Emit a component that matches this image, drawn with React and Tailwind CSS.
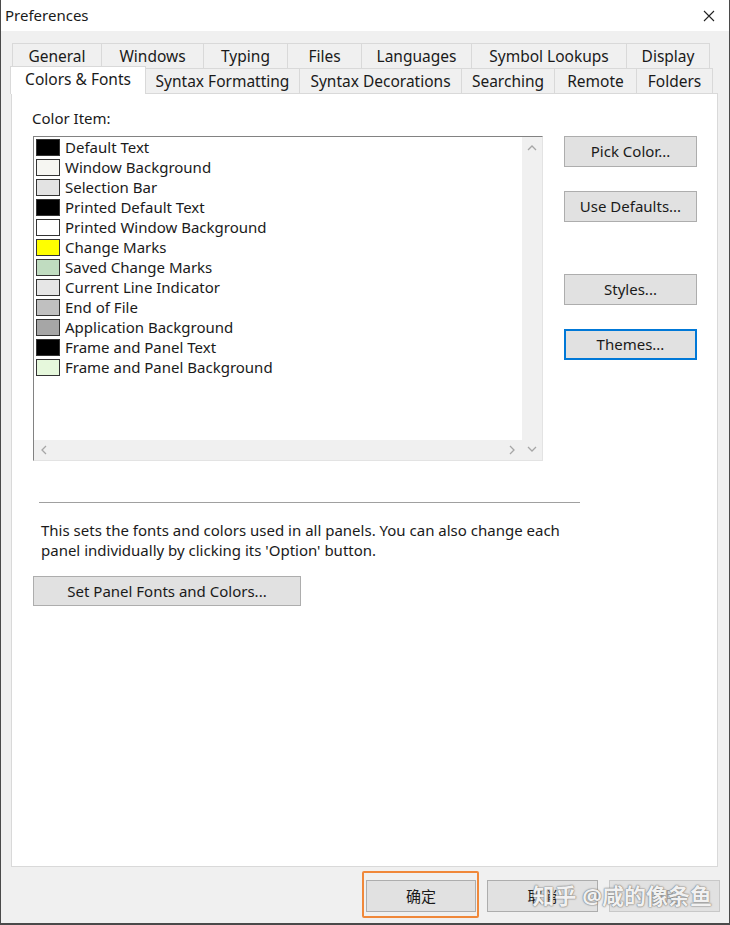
import React from "react";

const font = { fontFamily: '"Noto Sans", "Noto Sans CJK SC", sans-serif' };

const row1 = [
  ["General", "w-[90px]"],
  ["Windows", "w-[103px]"],
  ["Typing", "w-[85px]"],
  ["Files", "w-[75px]"],
  ["Languages", "w-[111px]"],
  ["Symbol Lookups", "w-[156px]"],
  ["Display", "w-[84px]"],
];

const row2 = [
  ["Syntax Formatting", "w-[155px]"],
  ["Syntax Decorations", "w-[163px]"],
  ["Searching", "w-[94px]"],
  ["Remote", "w-[83px]"],
  ["Folders", "w-[77px]"],
];

const items = [
  ["Default Text", "bg-black"],
  ["Window Background", "bg-[#f6f6f2]"],
  ["Selection Bar", "bg-[#e3e3e3]"],
  ["Printed Default Text", "bg-black"],
  ["Printed Window Background", "bg-white"],
  ["Change Marks", "bg-[#ffff00]"],
  ["Saved Change Marks", "bg-[#c0dcc0]"],
  ["Current Line Indicator", "bg-[#e6e6e6]"],
  ["End of File", "bg-[#c0c0c0]"],
  ["Application Background", "bg-[#a6a6a6]"],
  ["Frame and Panel Text", "bg-black"],
  ["Frame and Panel Background", "bg-[#e6f8dc]"],
];

function Chevron({ dir }) {
  const paths = {
    up: "M1 6 L5 2 L9 6",
    down: "M1 2 L5 6 L9 2",
    left: "M6 1 L2 5 L6 9",
    right: "M2 1 L6 5 L2 9",
  };
  const vert = dir === "up" || dir === "down";
  return (
    <svg width={vert ? 10 : 8} height={vert ? 8 : 10} viewBox={vert ? "0 0 10 8" : "0 0 8 10"}>
      <path d={paths[dir]} fill="none" stroke="#a6a6a6" strokeWidth="1.3" />
    </svg>
  );
}

function Btn({ children, className = "" }) {
  return (
    <div className={"flex items-center justify-center bg-[#e1e1e1] text-[15px] text-[#1a1a1a] " + className}>
      {children}
    </div>
  );
}

export default function App() {
  return (
    <div style={font} className="w-[730px] h-[925px] flex flex-col bg-[#f0f0f0] text-[#1a1a1a] border-x border-b-2 border-[#4a4a4a] overflow-hidden">
      {/* title bar */}
      <div className="h-[31px] bg-white flex items-center justify-between pl-[4px] pr-[14px] shrink-0">
        <span className="text-[15px]">Preferences</span>
        <svg width="12" height="12" viewBox="0 0 12 12">
          <path d="M1 1 L11 11 M11 1 L1 11" stroke="#222" strokeWidth="1.1" />
        </svg>
      </div>

      <div className="flex-1 flex flex-col pl-[10px] pr-[11px] pt-[12px]">
        {/* tabs */}
        <div className="flex ml-[1px] h-[25px]">
          {row1.map(([t, w]) => (
            <div key={t} className={w + " h-[25px] -mr-px border border-b-0 border-[#d9d9d9] flex items-center justify-center text-[15.5px] pt-[1px]"}>
              {t}
            </div>
          ))}
        </div>
        <div className="flex items-end h-[25px] relative z-10">
          <div className="w-[136px] h-[28px] -ml-px -mb-px bg-white border border-b-0 border-[#d9d9d9] flex items-center justify-center text-[15.5px] pb-[2px]">
            Colors &amp; Fonts
          </div>
          {row2.map(([t, w]) => (
            <div key={t} className={w + " h-[25px] -ml-px border border-b-0 border-[#d9d9d9] flex items-center justify-center text-[15.5px] pt-[1px]"}>
              {t}
            </div>
          ))}
        </div>

        {/* panel */}
        <div className="flex-1 bg-white border border-[#d9d9d9] pl-[21px] pt-[14px]">
          <div className="-ml-px text-[15px] leading-[20px]">Color Item:</div>
          <div className="flex mt-[8px]">
            <div className="w-[510px] h-[325px] border-t border-l border-[#828282] border-r border-b border-r-[#e3e3e3] border-b-[#e3e3e3] flex">
              <div className="flex-1 flex flex-col">
                <div className="flex-1 pl-[2px]">
                  {items.map(([t, c]) => (
                    <div key={t} className="h-[20px] flex items-center gap-[5px]">
                      <div className={c + " w-[24px] h-[17px] border border-[#333]"} />
                      <span className="text-[15px] leading-[20px]">{t}</span>
                    </div>
                  ))}
                </div>
                <div className="h-[20px] bg-[#f0f0f0] flex items-center justify-between px-[6px]">
                  <Chevron dir="left" />
                  <Chevron dir="right" />
                </div>
              </div>
              <div className="w-[20px] bg-[#f0f0f0] flex flex-col items-center justify-between py-[7px]">
                <Chevron dir="up" />
                <Chevron dir="down" />
              </div>
            </div>
            <div className="ml-[21px] flex flex-col">
              <Btn className="w-[133px] h-[31px] border border-[#adadad]">Pick Color...</Btn>
              <Btn className="w-[133px] h-[31px] border border-[#adadad] mt-[24px]">Use Defaults...</Btn>
              <Btn className="w-[133px] h-[31px] border border-[#adadad] mt-[52px]">Styles...</Btn>
              <Btn className="w-[133px] h-[31px] border-2 border-[#0078d7] mt-[24px]">Themes...</Btn>
            </div>
          </div>
          <div className="ml-[6px] mt-[41px] w-[541px] h-px bg-[#a0a0a0]" />
          <div className="ml-[8px] mt-[17px] text-[15px] leading-[20px] w-[560px]">
            This sets the fonts and colors used in all panels. You can also change each panel individually by clicking its 'Option' button.
          </div>
          <Btn className="mt-[16px] w-[268px] h-[30px] border border-[#adadad]">Set Panel Fonts and Colors...</Btn>
        </div>

        {/* bottom buttons */}
        <div className="h-[56px] shrink-0 flex items-start justify-end pt-[13px] gap-[11px] -mr-[2px] relative">
          <div className="relative">
            <Btn className="w-[110px] h-[32px] border border-[#adadad]">确定</Btn>
            <div className="absolute -left-[4px] -right-[3px] -top-[9px] -bottom-[6px] border-2 border-[#f0883a] rounded-[2px]" />
          </div>
          <Btn className="w-[111px] h-[32px] border border-[#adadad]">取消</Btn>
          <Btn className="w-[111px] h-[32px] border border-[#c8c8c8] text-[#a0a0a0]">应用</Btn>
          <div className="absolute right-[8px] top-[12px] text-[22px] font-bold text-white/90 [text-shadow:0_0_2px_#777,0_0_1px_#555] pointer-events-none">
            知乎 @咸的像条鱼
          </div>
        </div>
      </div>
    </div>
  );
}
